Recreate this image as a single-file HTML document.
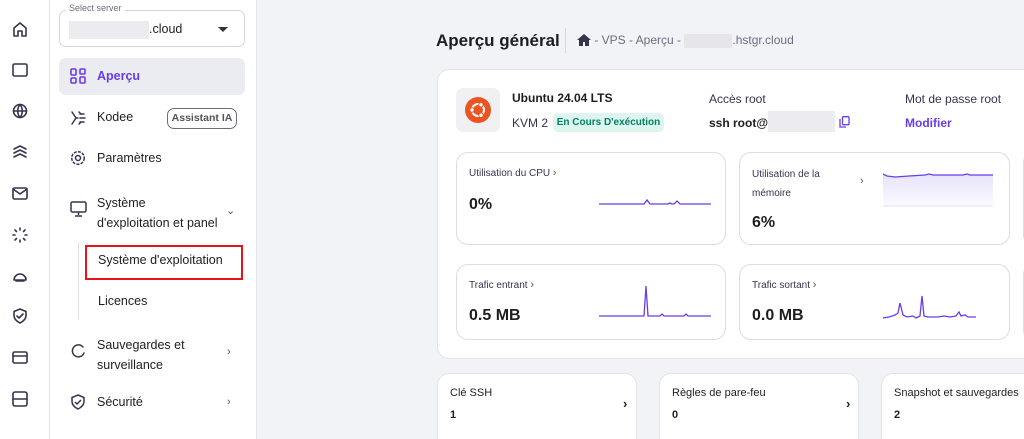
<!DOCTYPE html>
<html><head><meta charset="utf-8"><style>
*{box-sizing:border-box;margin:0;padding:0}
html,body{width:1024px;height:439px;overflow:hidden}
body{background:#f2f3f6;font-family:"Liberation Sans",sans-serif;color:#1d1e20;position:relative}
.abs{position:absolute}
.rail{left:0;top:0;width:50px;height:439px;background:#fff;border-right:1px solid #e3e4e8}
.side{left:50px;top:0;width:207px;height:439px;background:#fff;border-right:1px solid #e3e4e8}
.it{position:absolute;left:97px;font-size:12.5px;color:#1d1e20}
.card{background:#fff;border:1px solid #e3e4e8;border-radius:12px;overflow:hidden}
.mc{position:absolute;background:#fff;border:1px solid #dcdde3;border-radius:12px}
.lbl{font-size:10px;color:#36344d}
.big{font-size:16px;font-weight:bold}
.chev{color:#555;font-size:11px}
</style></head><body>
<div class="abs rail">
<svg width="50" height="439" fill="none" stroke="#36344d" stroke-width="1.6" stroke-linejoin="round" stroke-linecap="round">
<path d="M14 28l6-5 6 5v8h-4v-5h-4v5h-4z"/>
<rect x="13" y="64" width="14" height="12" rx="1.5"/>
<circle cx="20" cy="111" r="6.5"/><path d="M13.5 111h13M20 104.5c-3 3.5-3 9.5 0 13M20 104.5c3 3.5 3 9.5 0 13"/>
<path d="M14 149l6-3 6 3M14 153l6-3 6 3M14 157l6-3 6 3"/>
<rect x="13" y="188" width="14" height="11" rx="1.5"/><path d="M13 189l7 5 7-5"/>
<path d="M20 228v2M20 240v2M13 235h2M25 235h2M15 230l1.5 1.5M23.5 238.5l1.5 1.5M15 240l1.5-1.5M23.5 231.5l1.5-1.5"/>
<path d="M14 280a6 6 0 0 1 12 0v0M14 280h12v-2M16 281h8"/>
<path d="M20 309l6 2.5v4c0 4-3 6-6 7.5-3-1.5-6-3.5-6-7.5v-4z"/><path d="M17 316l2 2 4-4"/>
<rect x="13" y="352" width="14" height="11" rx="1.5"/><path d="M13 356h14"/>
<rect x="13" y="392" width="14" height="14" rx="2"/><path d="M13 399h14"/>
</svg></div>
<div class="abs side"></div>
<div class="abs" style="left:59px;top:10px;width:186px;height:37px;border:1px solid #d6d7dc;border-radius:7px"></div>
<div class="abs" style="left:66px;top:3px;background:#fff;padding:0 3px;font-size:9px;color:#6d6b80">Select server</div>
<div class="abs" style="left:69px;top:21px;width:80px;height:18px;background:#ececf0"></div>
<div class="abs" style="left:149px;top:22px;font-size:12.5px">.cloud</div>
<div class="abs" style="left:218px;top:27px;width:0;height:0;border-left:5px solid transparent;border-right:5px solid transparent;border-top:5px solid #333"></div>
<div class="abs" style="left:59px;top:58px;width:186px;height:37px;background:#ebebf2;border-radius:7px"></div>
<svg class="abs" style="left:70px;top:68px" width="16" height="16" fill="none" stroke="#673de6" stroke-width="1.6"><rect x="1" y="1" width="5" height="6" rx="1"/><rect x="10" y="1" width="5" height="5" rx="1"/><rect x="1" y="10" width="5" height="5" rx="1"/><rect x="10" y="9" width="5" height="6" rx="1"/></svg>
<div class="it" style="top:69px;color:#673de6;font-weight:bold">Aperçu</div>
<svg class="abs" style="left:70px;top:110px" width="16" height="16" fill="none" stroke="#36344d" stroke-width="1.5" stroke-linecap="round"><path d="M2 2l4 6-4 6M6 8h2M10 4l4 0M10 12h4M10 8h5M9 2l2 2M9 14l2-2"/></svg>
<div class="it" style="top:110px">Kodee</div>
<div class="abs" style="left:167px;top:108px;width:70px;height:21px;border:1.3px solid #6d6b80;border-radius:7px;font-size:10.5px;font-weight:bold;color:#555;text-align:center;line-height:18px">Assistant IA</div>
<svg class="abs" style="left:70px;top:150px" width="16" height="16" fill="none" stroke="#36344d" stroke-width="1.5"><circle cx="8" cy="8" r="2.5"/><circle cx="8" cy="8" r="6.3" stroke-dasharray="3 1.2"/></svg>
<div class="it" style="top:151px">Paramètres</div>
<svg class="abs" style="left:70px;top:201px" width="17" height="16" fill="none" stroke="#36344d" stroke-width="1.5"><rect x="1" y="1" width="15" height="10" rx="1.5"/><path d="M8.5 11v3M5 15h7"/></svg>
<div class="it" style="top:193px;line-height:20px">Système<br>d'exploitation et panel</div>
<div class="abs chev" style="left:226px;top:204px">⌄</div>
<div class="abs" style="left:78px;top:242px;width:1px;height:78px;background:#e0e0e6"></div>
<div class="abs" style="left:85px;top:245px;width:158px;height:35px;border:2px solid #e8141c"></div>
<div class="it" style="top:253px;left:98px">Système d'exploitation</div>
<div class="it" style="top:294px;left:98px">Licences</div>
<svg class="abs" style="left:70px;top:343px" width="16" height="16" fill="none" stroke="#36344d" stroke-width="1.5" stroke-linecap="round"><path d="M13 4A6 6 0 1 0 14 10"/></svg>
<div class="it" style="top:335px;line-height:20px">Sauvegardes et<br>surveillance</div>
<div class="abs chev" style="left:227px;top:346px">›</div>
<svg class="abs" style="left:70px;top:394px" width="16" height="16" fill="none" stroke="#36344d" stroke-width="1.5"><path d="M8 1l6 2.5v4c0 4-3 6-6 7.5-3-1.5-6-3.5-6-7.5v-4z"/><path d="M5 8l2 2 4-4"/></svg>
<div class="it" style="top:395px">Sécurité</div>
<div class="abs chev" style="left:227px;top:396px">›</div>

<div class="abs" style="left:436px;top:31px;font-size:17px;font-weight:bold">Aperçu général</div>
<div class="abs" style="left:565px;top:28px;width:1px;height:25px;background:#d6d7dc"></div>
<div class="abs" style="left:577px;top:33px;font-size:12px;color:#6d6b80"><span style="display:inline-block;width:14px"></span> - VPS - Aperçu - <span style="display:inline-block;width:48px;height:14px;background:#e6e6ea;vertical-align:middle"></span>.hstgr.cloud</div>
<svg class="abs" style="left:577px;top:34px" width="14" height="12"><path d="M7 0L0 6h2v6h4V8h2v4h4V6h2z" fill="#36344d"/></svg>

<div class="abs card" style="left:437px;top:69px;width:600px;height:290px"></div>
<div class="abs" style="left:456px;top:88px;width:44px;height:44px;background:#f0f0f3;border-radius:7px"></div>
<svg class="abs" style="left:464px;top:96px" width="28" height="28"><circle cx="14" cy="14" r="13" fill="#e95420"/><circle cx="14" cy="14" r="6" fill="none" stroke="#fff" stroke-width="2"/><circle cx="8" cy="14" r="2.2" fill="#fff" stroke="#e95420"/><circle cx="17" cy="8.8" r="2.2" fill="#fff" stroke="#e95420"/><circle cx="17" cy="19.2" r="2.2" fill="#fff" stroke="#e95420"/></svg>
<div class="abs" style="left:512px;top:91px;font-size:12px;font-weight:bold">Ubuntu 24.04 LTS</div>
<div class="abs" style="left:512px;top:116px;font-size:12px;color:#36344d">KVM 2</div>
<div class="abs" style="left:553px;top:113px;width:111px;height:19px;background:#def4f0;border-radius:5px;font-size:10px;font-weight:bold;color:#008361;text-align:center;line-height:19px">En Cours D'exécution</div>
<div class="abs" style="left:709px;top:92px;font-size:12px;color:#36344d">Accès root</div>
<div class="abs" style="left:709px;top:116px;font-size:12px;font-weight:bold">ssh root@</div>
<div class="abs" style="left:768px;top:111px;width:67px;height:21px;background:#ececf0"></div>
<svg class="abs" style="left:839px;top:116px" width="11" height="12" fill="none" stroke="#673de6" stroke-width="1.3"><rect x="3.5" y="0.7" width="6.5" height="8" rx="1"/><path d="M1 3v8h6"/></svg>
<div class="abs" style="left:905px;top:92px;font-size:12px;color:#36344d">Mot de passe root</div>
<div class="abs" style="left:905px;top:116px;font-size:12px;font-weight:bold;color:#673de6">Modifier</div>

<div class="mc" style="left:456px;top:152px;width:270px;height:93px"><div class="abs lbl" style="left:12px;top:14px">Utilisation du CPU <span class="chev">›</span></div><div class="abs big" style="left:12px;top:43px">0%</div></div>
<svg class="abs" style="left:599px;top:196px" width="112" height="14" fill="none" stroke="#673de6" stroke-width="1.3"><path d="M0 8h45l3-4 3 4h18l2-1 2 1h2l3-3 3 3h33"/></svg>
<div class="mc" style="left:739px;top:152px;width:271px;height:93px"><div class="abs lbl" style="left:12px;top:12px;line-height:19px">Utilisation de la<br>mémoire</div><div class="abs chev" style="left:120px;top:22px">›</div><div class="abs big" style="left:12px;top:61px">6%</div></div>
<svg class="abs" style="left:883px;top:168px" width="110" height="40"><defs><linearGradient id="g" x1="0" y1="0" x2="0" y2="1"><stop offset="0" stop-color="#e8e3fb"/><stop offset="1" stop-color="#fbfaff"/></linearGradient></defs><path d="M0 6l4 2 8 1 14-1 16-1 4-1 4 1h30l4-1 3 1h23V38H0z" fill="url(#g)"/><path d="M0 6l4 2 8 1 14-1 16-1 4-1 4 1h30l4-1 3 1h23" fill="none" stroke="#673de6" stroke-width="1.3"/><path d="M0 38h110" stroke="#e4e0f5"/></svg>
<div class="mc" style="left:1023px;top:152px;width:20px;height:93px"></div>

<div class="mc" style="left:456px;top:264px;width:270px;height:76px"><div class="abs lbl" style="left:12px;top:14px">Trafic entrant <span class="chev">›</span></div><div class="abs big" style="left:12px;top:42px">0.5 MB</div></div>
<svg class="abs" style="left:599px;top:284px" width="112" height="36" fill="none" stroke="#673de6" stroke-width="1.3"><path d="M0 32h45l2-30 2 30h12l2-2 2 2h20l2-2 2 2h25"/></svg>
<div class="mc" style="left:739px;top:264px;width:271px;height:76px"><div class="abs lbl" style="left:12px;top:14px">Trafic sortant <span class="chev">›</span></div><div class="abs big" style="left:12px;top:42px">0.0 MB</div></div>
<svg class="abs" style="left:883px;top:284px" width="112" height="36" fill="none" stroke="#673de6" stroke-width="1.3"><path d="M0 34l6-1 6-2 3-2 2-10 3 12 4 2 6-1 3 2 2-1 2-1 2-20 2 20 4 1h10l6-1 6 1 6-1 3-4 2 4 4-1 3 2h8"/></svg>
<div class="mc" style="left:1023px;top:264px;width:20px;height:76px"></div>

<div class="abs card" style="left:437px;top:373px;width:200px;height:80px"><div class="abs" style="left:12px;top:13px;font-size:11px">Clé SSH</div><div class="abs" style="left:12px;top:35px;font-size:11px;font-weight:bold">1</div><div class="abs" style="left:185px;top:22px;font-weight:bold;font-size:13px">›</div></div>
<div class="abs card" style="left:659px;top:373px;width:200px;height:80px"><div class="abs" style="left:12px;top:13px;font-size:11px">Règles de pare-feu</div><div class="abs" style="left:12px;top:35px;font-size:11px;font-weight:bold">0</div><div class="abs" style="left:186px;top:22px;font-weight:bold;font-size:13px">›</div></div>
<div class="abs card" style="left:881px;top:373px;width:200px;height:80px"><div class="abs" style="left:12px;top:13px;font-size:11px;white-space:nowrap">Snapshot et sauvegardes</div><div class="abs" style="left:12px;top:35px;font-size:11px;font-weight:bold">2</div></div>
</body></html>
